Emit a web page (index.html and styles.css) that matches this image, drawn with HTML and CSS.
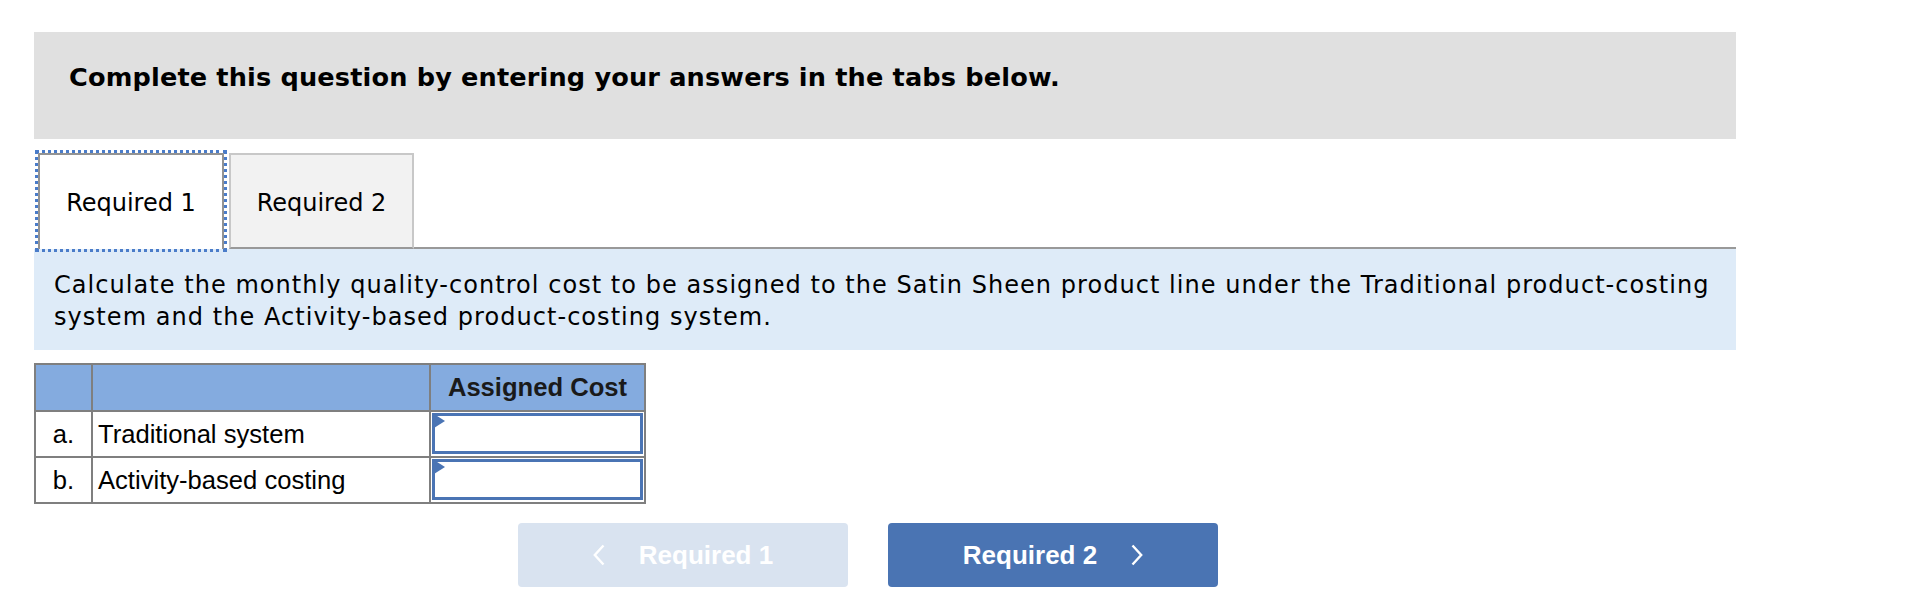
FILE: index.html
```html
<!DOCTYPE html>
<html lang="en">
<head>
<meta charset="utf-8">
<title>Required 1</title>
<link rel="stylesheet" href="styles.css">
</head>
<body>
<div class="page">
  <div class="instructions">
    <p class="instructions-text">Complete this question by entering your answers in the tabs below.</p>
  </div>

  <div class="tabs">
    <div class="tab tab-active">Required 1</div>
    <div class="tab tab-inactive">Required 2</div>
    <div class="tab-fill"></div>
  </div>

  <div class="panel">
    <p class="panel-text">Calculate the monthly quality-control cost to be assigned to the Satin Sheen product line under the Traditional product-costing system and the Activity-based product-costing system.</p>
  </div>

  <table class="answer">
    <colgroup>
      <col class="col-letter">
      <col class="col-label">
      <col class="col-value">
    </colgroup>
    <thead>
      <tr class="head-row">
        <th></th>
        <th></th>
        <th>Assigned Cost</th>
      </tr>
    </thead>
    <tbody>
      <tr class="body-row">
        <td class="letter">a.</td>
        <td class="label">Traditional system</td>
        <td class="value"><div class="input-wrap"><input class="cost-input" type="text" aria-label="Traditional system"><span class="marker"></span></div></td>
      </tr>
      <tr class="body-row">
        <td class="letter">b.</td>
        <td class="label">Activity-based costing</td>
        <td class="value"><div class="input-wrap"><input class="cost-input" type="text" aria-label="Activity-based costing"><span class="marker"></span></div></td>
      </tr>
    </tbody>
  </table>

  <div class="nav">
    <button class="nav-btn nav-prev" type="button">
      <svg class="chev" width="12" height="22" viewBox="0 0 12 22" aria-hidden="true"><polyline points="10.5,1.5 1.8,11 10.5,20.5" fill="none" stroke="#ffffff" stroke-width="2.4"/></svg>
      <span>Required 1</span>
    </button>
    <button class="nav-btn nav-next" type="button">
      <span>Required 2</span>
      <svg class="chev" width="12" height="22" viewBox="0 0 12 22" aria-hidden="true"><polyline points="1.5,1.5 10.2,11 1.5,20.5" fill="none" stroke="#ffffff" stroke-width="2.4"/></svg>
    </button>
  </div>
</div>
</body>
</html>
```

FILE: styles.css
```css
html, body {
  margin: 0;
  padding: 0;
  background: #ffffff;
}

.page {
  width: 1702px;
  margin-left: 34px;
  padding-top: 32px;
}

.instructions {
  box-sizing: border-box;
  height: 107px;
  background: #e0e0e0;
  padding: 30px 0 0 35px;
}

.instructions-text {
  margin: 0;
  font-family: "DejaVu Sans", Verdana, sans-serif;
  font-weight: bold;
  font-size: 25.6px;
  line-height: 30px;
  letter-spacing: 0.15px;
  color: #000000;
}

.tabs {
  display: flex;
  height: 96px;
  margin-top: 14px;
  padding-left: 4px;
}

.tab {
  box-sizing: border-box;
  display: flex;
  align-items: center;
  justify-content: center;
  font-family: "DejaVu Sans", Verdana, sans-serif;
  font-size: 24px;
  color: #000000;
}

.tab-active {
  width: 186px;
  background: #ffffff;
  border: 2px solid #939393;
  border-bottom: none;
  outline: 3px dotted #4a7cc9;
  outline-offset: 0px;
  margin-right: 5px;
  padding-top: 2px;
}

.tab-inactive {
  width: 185px;
  background: #f2f2f2;
  border: 2px solid #c8c8c8;
  border-bottom: 2px solid #999999;
  padding-top: 4px;
}

.tab-fill {
  flex: 1;
  border-bottom: 2px solid #999999;
}

.panel {
  background: #deebf8;
  padding: 20px 10px 17px 20px;
}

.panel-text {
  margin: 0;
  font-family: "DejaVu Sans", Verdana, sans-serif;
  font-size: 24px;
  line-height: 32px;
  letter-spacing: 1.05px;
  color: #000000;
}

.answer {
  margin-top: 13px;
  border-collapse: collapse;
  table-layout: fixed;
  width: 610px;
  font-family: "Liberation Sans", Arial, sans-serif;
  font-size: 25.6px;
  color: #000000;
}

.col-letter { width: 57px; }
.col-label { width: 338px; }
.col-value { width: 215px; }

.answer th,
.answer td {
  border: 2px solid #7f7f7f;
  padding: 0;
}

.head-row {
  height: 47px;
}

.head-row th {
  background: #84abdf;
  font-weight: bold;
  text-align: center;
  color: #1a1a1a;
}

.body-row {
  height: 46px;
}

.letter {
  text-align: center;
}

.label {
  padding: 0 5px !important;
  text-align: left;
}

.value {
  padding: 0 !important;
  vertical-align: top;
}

.input-wrap {
  position: relative;
  padding: 1px 1px 2px 1px;
}

.cost-input {
  display: block;
  box-sizing: border-box;
  width: 100%;
  height: 41px;
  margin: 0;
  border: 3px solid #4a74b4;
  background: #ffffff;
  font-family: "Liberation Sans", Arial, sans-serif;
  font-size: 22px;
  outline: none;
}

.marker {
  position: absolute;
  left: 3px;
  top: 2px;
  width: 0;
  height: 0;
  border-top: 7px solid transparent;
  border-bottom: 7px solid transparent;
  border-left: 11px solid #4a74b4;
}

.nav {
  display: flex;
  gap: 40px;
  margin-top: 19px;
  margin-left: 484px;
}

.nav-btn {
  box-sizing: border-box;
  display: flex;
  align-items: center;
  justify-content: center;
  gap: 34px;
  width: 330px;
  height: 64px;
  border: none;
  border-radius: 4px;
  padding: 0;
  font-family: "Liberation Sans", Arial, sans-serif;
  font-weight: bold;
  font-size: 26px;
  color: #ffffff;
}

.nav-prev {
  background: #d9e3f0;
}

.nav-next {
  background: #4a74b3;
}

.chev {
  display: block;
}
```
